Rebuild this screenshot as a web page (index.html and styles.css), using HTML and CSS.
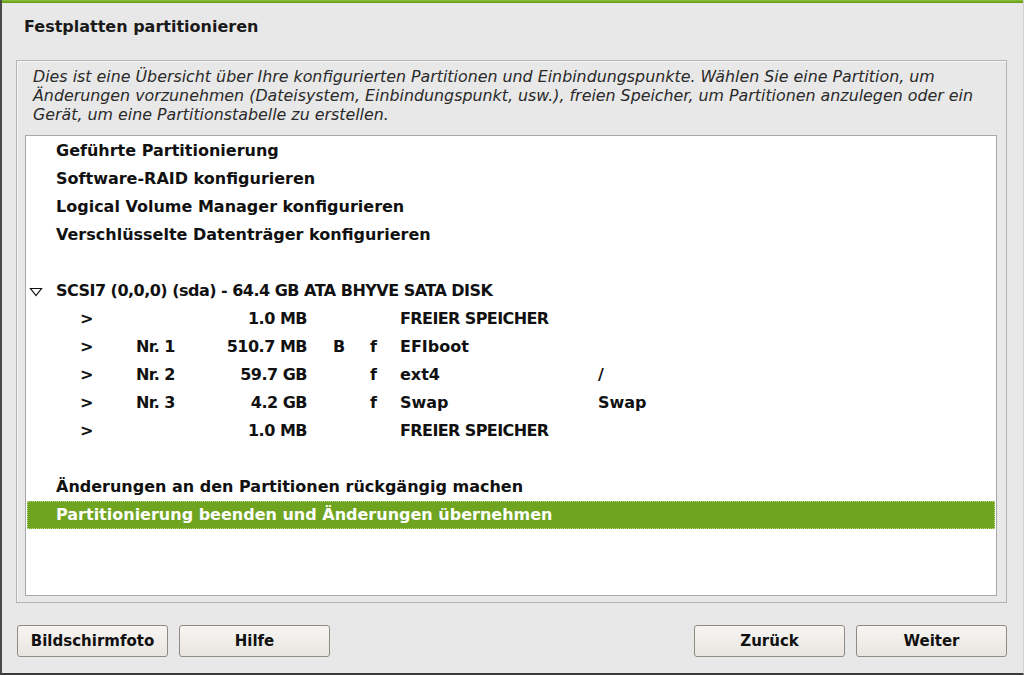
FILE: index.html
```html
<!DOCTYPE html>
<html lang="de">
<head>
    <meta charset="UTF-8">
    <title>Festplatten partitionieren</title>
    <link rel="stylesheet" href="styles.css">
</head>
<body>
    <div class="window">
        <div class="top-bar"></div>

        <h1 class="page-title">Festplatten partitionieren</h1>

        <!-- Main frame -->
        <div class="frame">
            <p class="description">Dies ist eine Übersicht über Ihre konfigurierten Partitionen und Einbindungspunkte. Wählen Sie eine Partition, um Änderungen vorzunehmen (Dateisystem, Einbindungspunkt, usw.), freien Speicher, um Partitionen anzulegen oder ein Gerät, um eine Partitionstabelle zu erstellen.</p>

            <div class="list">
                <div class="row">Geführte Partitionierung</div>
                <div class="row">Software-RAID konfigurieren</div>
                <div class="row">Logical Volume Manager konfigurieren</div>
                <div class="row">Verschlüsselte Datenträger konfigurieren</div>
                <div class="row"></div>

                <div class="row disk-row">
                    <svg class="expander" width="14" height="10" viewBox="0 0 14 10">
                        <polygon points="1.5,1.5 12.5,1.5 7,8.5" fill="none" stroke="#111" stroke-width="1.2"/>
                    </svg>
                    <span>SCSI7 (0,0,0) (sda) - 64.4 GB ATA BHYVE SATA DISK</span>
                </div>

                <div class="row part-row">
                    <span>&gt;</span><span></span><span class="size">1.0 MB</span><span></span><span></span><span class="caps">FREIER SPEICHER</span><span></span>
                </div>
                <div class="row part-row">
                    <span>&gt;</span><span class="caps">Nr. 1</span><span class="size">510.7 MB</span><span class="flag">B</span><span>f</span><span>EFIboot</span><span></span>
                </div>
                <div class="row part-row">
                    <span>&gt;</span><span class="caps">Nr. 2</span><span class="size">59.7 GB</span><span></span><span>f</span><span>ext4</span><span>/</span>
                </div>
                <div class="row part-row">
                    <span>&gt;</span><span class="caps">Nr. 3</span><span class="size">4.2 GB</span><span></span><span>f</span><span>Swap</span><span>Swap</span>
                </div>
                <div class="row part-row">
                    <span>&gt;</span><span></span><span class="size">1.0 MB</span><span></span><span></span><span class="caps">FREIER SPEICHER</span><span></span>
                </div>

                <div class="row"></div>
                <div class="row">Änderungen an den Partitionen rückgängig machen</div>
                <div class="row selected">Partitionierung beenden und Änderungen übernehmen</div>
            </div>
        </div>

        <!-- Buttons -->
        <div class="footer">
            <div class="btn-group">
                <button class="btn">Bildschirmfoto</button>
                <button class="btn">Hilfe</button>
            </div>
            <div class="btn-group">
                <button class="btn">Zurück</button>
                <button class="btn">Weiter</button>
            </div>
        </div>
    </div>
</body>
</html>
```

FILE: styles.css
```css
* {
    margin: 0;
    padding: 0;
    box-sizing: border-box;
    font-family: "DejaVu Sans", Verdana, sans-serif;
}

body {
    background-color: #e8e8e8;
    width: 1024px;
    height: 675px;
    overflow: hidden;
}

.window {
    height: 675px;
    border-left: 2px solid #4a4a4a;
    border-bottom: 2px solid #3a3a3a;
    border-right: 1px solid #d0d0d0;
    display: flex;
    flex-direction: column;
}

.top-bar {
    height: 3px;
    background: linear-gradient(#8cc43c, #5e9614);
}

.page-title {
    font-size: 16px;
    font-weight: bold;
    color: #1a1a1a;
    line-height: 18px;
    padding: 15px 0 0 22px;
    margin-bottom: 24px;
}

.frame {
    margin: 0 16px 0 14px;
    border: 1px solid #b4b4b4;
    box-shadow: inset 1px 1px 0 #f6f6f6;
    padding: 6px 9px 6px 8px;
}

.description {
    font-size: 15.85px;
    font-style: italic;
    line-height: 19px;
    color: #2a2a2a;
    padding-left: 8px;
    margin-bottom: 11px;
}

.list {
    background-color: white;
    border: 1px solid #a8a8a8;
    height: 461px;
    padding: 1px;
}

.row {
    height: 28px;
    line-height: 28px;
    font-size: 16px;
    font-weight: bold;
    color: #111;
    padding-left: 29px;
    white-space: nowrap;
}

.disk-row {
    display: flex;
    align-items: center;
    padding-left: 2px;
    letter-spacing: -0.52px;
}

.expander {
    margin-right: 13px;
    margin-top: 1px;
}

.part-row {
    display: grid;
    grid-template-columns: 56px 80px 91px 63px 30px 198px 1fr;
    padding-left: 53px;
}

.caps {
    letter-spacing: -0.6px;
}

.size {
    text-align: right;
    letter-spacing: -0.5px;
}

.flag {
    padding-left: 26px;
}

.selected {
    background-color: #6ea41f;
    color: white;
    outline: 1px dotted #b9dc86;
    outline-offset: -1px;
}

.footer {
    display: flex;
    justify-content: space-between;
    padding: 22px 16px 0 15px;
}

.btn-group {
    display: flex;
    gap: 11px;
}

.btn {
    width: 151px;
    height: 32px;
    font-size: 15px;
    font-weight: bold;
    color: #111;
    background: linear-gradient(#f7f5f2, #e9e6e1);
    border: 1px solid #8f8a82;
    border-radius: 3px;
    cursor: pointer;
}
```
